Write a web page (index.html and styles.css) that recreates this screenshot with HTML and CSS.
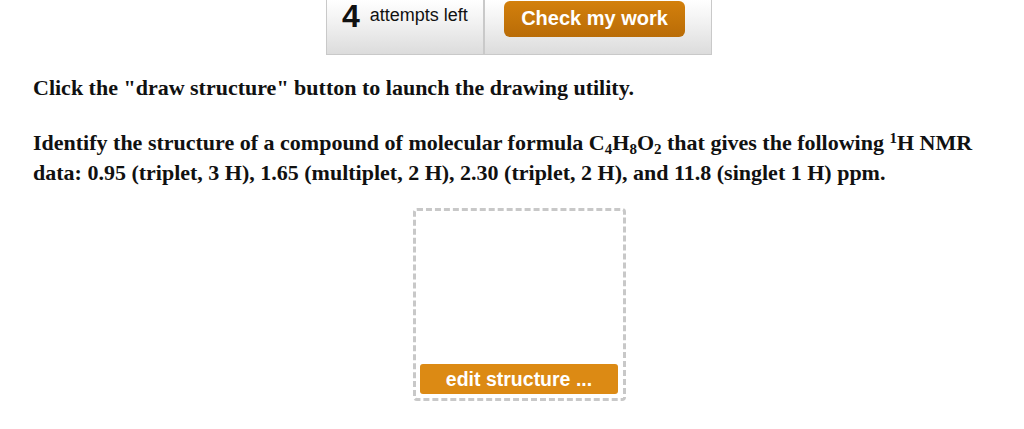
FILE: index.html
```html
<!DOCTYPE html>
<html>
<head>
<meta charset="utf-8">
<link rel="stylesheet" href="styles.css">
</head>
<body>
<div class="page">
  <div class="toolbar-wrap">
    <div class="toolbar">
      <div class="attempts"><span class="num">4</span><span class="label">attempts left</span></div>
      <div class="check-cell"><button class="check-btn">Check my work</button></div>
    </div>
  </div>
  <p class="q q-first">Click the "draw structure" button to launch the drawing utility.</p>
  <p class="q">Identify the structure of a compound of molecular formula C<sub>4</sub>H<sub>8</sub>O<sub>2</sub> that gives the following <sup>1</sup>H NMR data: 0.95 (triplet, 3 H), 1.65 (multiplet, 2 H), 2.30 (triplet, 2 H), and 11.8 (singlet 1 H) ppm.</p>
  <div class="draw-wrap">
    <div class="draw-box">
      <button class="edit-btn">edit structure ...</button>
    </div>
  </div>
</div>
</body>
</html>
```
FILE: styles.css
```css
html, body {
  margin: 0;
  padding: 0;
  background: #ffffff;
}
.page {
  padding: 0 19px 0 33px;
  font-family: "Liberation Serif", "Times New Roman", serif;
  color: #111;
}
.toolbar-wrap {
  display: flex;
  justify-content: center;
}
.toolbar {
  display: flex;
  height: 54px;
  border: 1px solid #c9c9c9;
  border-top: none;
  background: linear-gradient(#ffffff 0%, #f2f2f2 40%, #dcdcdc 100%);
  font-family: "Liberation Sans", Arial, sans-serif;
}
.attempts {
  width: 158px;
  border-right: 2px solid #c9c9c9;
  display: flex;
  align-items: flex-start;
  padding: 1px 0 0 15px;
  box-sizing: border-box;
  color: #111;
}
.num {
  font-size: 32px;
  font-weight: bold;
  line-height: 30px;
  margin-right: 10px;
}
.label {
  font-size: 18px;
  line-height: 28px;
}
.check-cell {
  width: 226px;
  padding: 1px 0 0 19px;
  box-sizing: border-box;
}
.check-btn {
  display: block;
  width: 181px;
  height: 36px;
  border: none;
  border-radius: 6px;
  background: linear-gradient(#d3800c, #b96c07);
  color: #fff;
  font-family: "Liberation Sans", Arial, sans-serif;
  font-weight: bold;
  font-size: 20px;
  padding: 0 0 2px 0;
  cursor: pointer;
}
.q {
  margin: 0;
  font-weight: bold;
  font-size: 22px;
  line-height: 30px;
}
.q-first {
  margin-top: 18px;
  margin-bottom: 25px;
}
.q sub, .q sup {
  font-size: 15px;
  line-height: 0;
}
.q sub {
  vertical-align: -4px;
}
.q sup {
  vertical-align: 7px;
}
.draw-wrap {
  display: flex;
  justify-content: center;
  margin-top: 20px;
}
.draw-box {
  width: 213px;
  height: 193px;
  box-sizing: border-box;
  border: 3px dashed #c8c8c8;
  border-radius: 4px;
  display: flex;
  align-items: flex-end;
  justify-content: center;
  padding-bottom: 4px;
}
.edit-btn {
  width: 198px;
  height: 30px;
  border: none;
  border-radius: 3px;
  background: #dc8a14;
  color: #fff;
  font-family: "Liberation Sans", Arial, sans-serif;
  font-weight: bold;
  font-size: 19.5px;
  padding: 0;
}
```
